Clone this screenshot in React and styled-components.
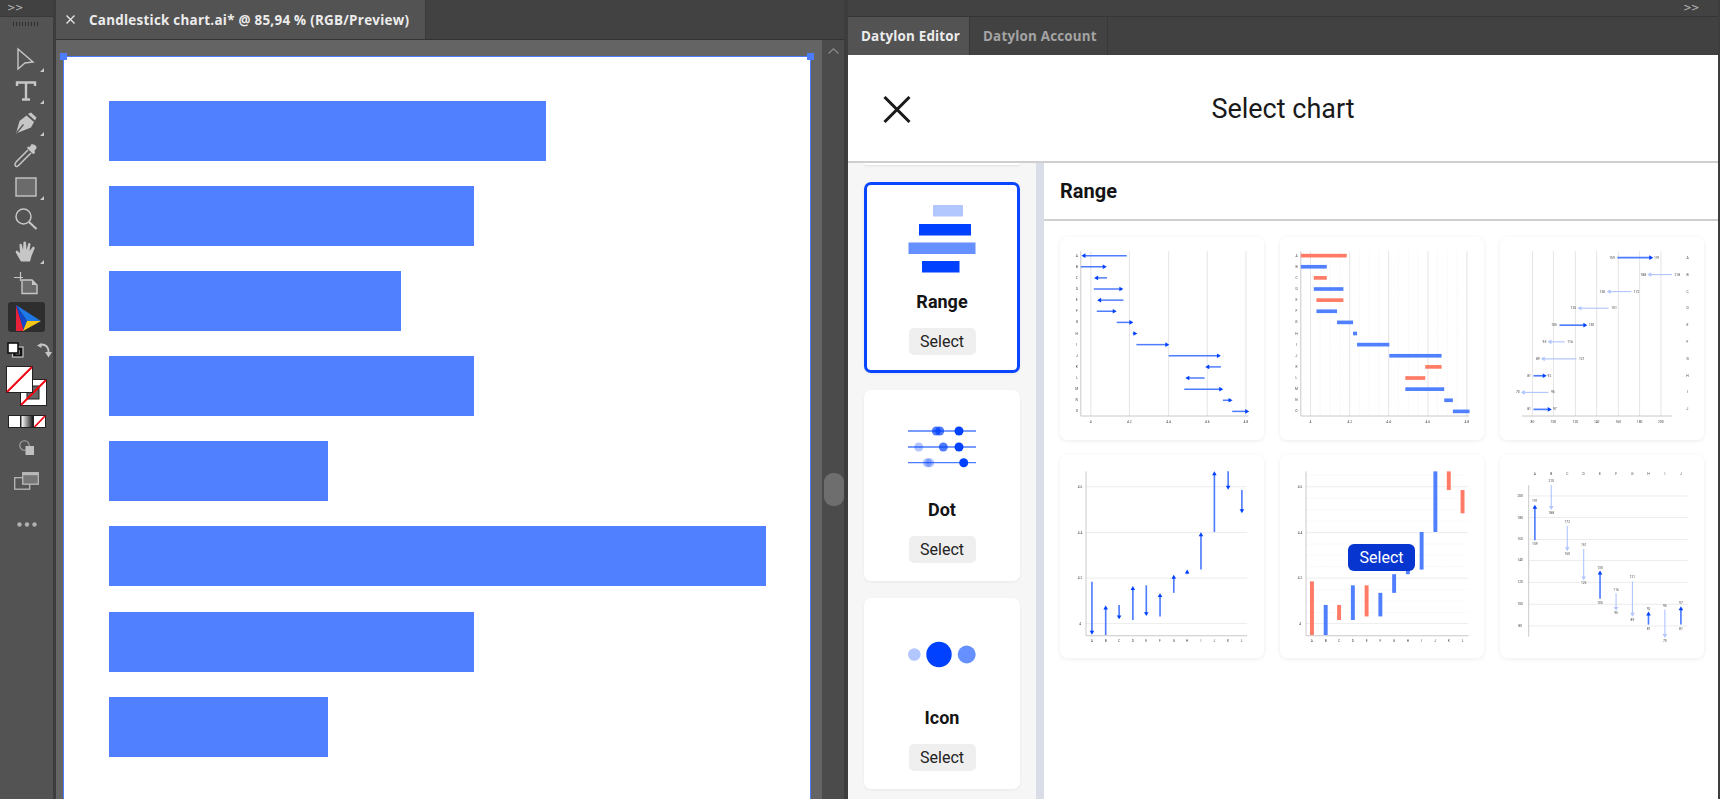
import React from 'react';
import styled, { createGlobalStyle } from 'styled-components';

const GlobalStyle = createGlobalStyle`
  html, body { margin: 0; padding: 0; height: 100%; background: #3d3d3d; overflow: hidden; }
  #root { height: 100%; }
  * { box-sizing: border-box; }
`;

const Page = styled.div`
  display: flex;
  width: 1720px;
  height: 799px;
  overflow: hidden;
  font-family: Roboto, "Liberation Sans", sans-serif;
  background: #3d3d3d;
`;

/* ---------- illustrator tool bar ---------- */

const Toolbar = styled.div`
  width: 53px;
  margin-right: 3px;
  flex-shrink: 0;
  display: flex;
  flex-direction: column;
  background: #535353;
`;

const ToolbarTop = styled.div`
  height: 17px;
  background: #414141;
  border-bottom: 1px solid #383838;
  color: #b8b8b8;
  font: 10px/16px "DejaVu Sans", sans-serif;
  padding-left: 7px;
  letter-spacing: -0.5px;
`;

const Grip = styled.div`
  height: 4px;
  margin: 5px 0 0 13px;
  width: 26px;
  background: repeating-linear-gradient(90deg, #2f2f2f 0 1px, transparent 1px 3px);
`;

const ToolSlot = styled.div`
  height: ${(p) => p.$h}px;
  flex-shrink: 0;
  display: flex;
  align-items: center;
  justify-content: center;
  position: relative;
  padding-right: ${(p) => p.$shift || 0}px;
`;

const ColorRow = styled.div`
  height: 18px;
  flex-shrink: 0;
  display: flex;
  align-items: center;
  gap: 12px;
  padding-left: 7px;
`;

const Flyout = styled.span`
  position: absolute;
  right: 9px;
  bottom: ${(p) => p.$b || 3}px;
  width: 0;
  height: 0;
  border-left: 4px solid transparent;
  border-bottom: 4px solid #c8c8c8;
`;

const LogoBox = styled.div`
  width: 37px;
  height: 30px;
  margin-left: 8px;
  border-radius: 3px;
  background: #2e2e2e;
  overflow: hidden;
`;

const ToolIcon = styled.svg`
  display: block;
  overflow: visible;
`;

const g = '#c6c6c6';

const SelectTool = () => (
  <ToolIcon width="18" height="22" viewBox="0 0 18 22">
    <path d="M1 1 L16 14 L8 15 L1 21 Z" fill="none" stroke={g} strokeWidth="1.4" />
  </ToolIcon>
);
const TypeTool = () => (
  <ToolIcon width="20" height="20" viewBox="0 0 20 20">
    <path d="M1 5 V1.5 H19 V5 M10 1.5 V18.5 M6 18.5 H14" fill="none" stroke={g} strokeWidth="2.4" />
  </ToolIcon>
);
const PenTool = () => (
  <ToolIcon width="22" height="22" viewBox="0 0 22 22">
    <path d="M13 2 L16 0.5 L21.5 5.5 L20 8.5 Z" fill={g} />
    <path d="M11.5 3.5 L19 10 L16 15.5 L1 21.5 L4.5 9 Z" fill={g} />
    <path d="M1.5 21 L8.5 12.5" stroke="#535353" strokeWidth="1.2" />
  </ToolIcon>
);
const DropperTool = () => (
  <ToolIcon width="23" height="23" viewBox="0 0 23 23">
    <path d="M17 0.5 Q20 -0.5 22.5 2.5 Q23 5 20.5 6.5 L21 9 L19 10 L13 4 L14 2.5 L16 3 Z" fill={g} />
    <path d="M14 6 L2.5 17.5 Q0 20.5 1.5 22 Q3 23.5 5.5 20.5 L17 9" fill="none" stroke={g} strokeWidth="1.5" />
  </ToolIcon>
);
const RectTool = () => (
  <ToolIcon width="22" height="20" viewBox="0 0 22 20">
    <rect x="1" y="1" width="20" height="18" fill="#6b6b6b" stroke={g} strokeWidth="1.4" />
  </ToolIcon>
);
const ZoomTool = () => (
  <ToolIcon width="22" height="22" viewBox="0 0 22 22">
    <circle cx="8.5" cy="8.5" r="7.5" fill="none" stroke={g} strokeWidth="1.5" />
    <path d="M14 14 L21.5 21" stroke={g} strokeWidth="2.2" />
  </ToolIcon>
);
const HandTool = () => (
  <ToolIcon width="21" height="21" viewBox="0 0 21 21">
    <path
      d="M6 20.5 L1 12 Q0 10 2 9.5 L5 12 L4.5 3.5 Q5.5 2 6.8 3.5 L8 9 L8.5 1 Q10 0 11 1 L11.5 9 L13.5 2 Q15 1.5 15.5 3 L14.5 10 L18 5.5 Q19.8 5.5 19.8 7 L16.5 15 L15 20.5 Z"
      fill={g}
    />
  </ToolIcon>
);
const ArtboardTool = () => (
  <ToolIcon width="24" height="22" viewBox="0 0 24 22">
    <path d="M0 5.5 H9 M6.5 0 V9" stroke={g} strokeWidth="1.2" fill="none" />
    <path d="M8 8 H18 L23 13 V21.5 H8 Z" fill="#6b6b6b" stroke={g} strokeWidth="1.4" />
    <path d="M18 8 V13 H23 Z" fill={g} />
  </ToolIcon>
);
const LogoMark = () => (
  <ToolIcon width="37" height="30" viewBox="0 0 37 30">
    <path d="M8 3 L33 19 L19 19 Z" fill="#1e78e6" />
    <path d="M8 3 L16 29 L8 29 Z" fill="#e8203a" />
    <path d="M8 3 L19 19 L16 29 Z" fill="#1448c8" />
    <path d="M15 29 L19 19 L33 19 Z" fill="#f5c518" />
  </ToolIcon>
);
const DefaultColors = () => (
  <ToolIcon width="17" height="16" viewBox="0 0 17 16">
    <rect x="5.5" y="5" width="10.5" height="10" fill="#111" stroke={g} strokeWidth="1.2" />
    <rect x="8.5" y="8" width="4.5" height="4.5" fill="#777" />
    <rect x="1" y="1" width="10" height="10" fill="#fff" stroke="#111" strokeWidth="1.6" />
  </ToolIcon>
);
const SwapColors = () => (
  <ToolIcon width="16" height="15" viewBox="0 0 16 15">
    <path d="M5 1.5 Q13 1.5 12.5 10" fill="none" stroke={g} strokeWidth="2" />
    <path d="M5.5 0 L1 2.5 L5.5 5 Z M9 9 H16 L12.5 14.5 Z" fill={g} />
  </ToolIcon>
);
const FillStroke = () => (
  <ToolIcon width="41" height="40" viewBox="0 0 41 40">
    <rect x="14.5" y="13.5" width="26" height="26" fill="#fff" stroke="#222" />
    <rect x="21" y="20" width="12" height="13" fill="#666" stroke="#222" />
    <path d="M15 39 L40 14" stroke="#f00010" strokeWidth="2" />
    <rect x="0.5" y="0.5" width="26" height="26" fill="#fff" stroke="#222" />
    <path d="M1 26 L26 1" stroke="#f00010" strokeWidth="2" />
  </ToolIcon>
);
const ColorModes = () => (
  <ToolIcon width="38" height="13" viewBox="0 0 38 13">
    <defs>
      <linearGradient id="modeGrad" x1="0" x2="1" y1="0" y2="0">
        <stop offset="0" stopColor="#fff" />
        <stop offset="1" stopColor="#222" />
      </linearGradient>
    </defs>
    <rect width="38" height="13" fill="#222" />
    <rect x="1" y="1" width="11" height="11" fill="#fff" />
    <rect x="13.5" y="1" width="11" height="11" fill="url(#modeGrad)" />
    <rect x="26" y="1" width="11" height="11" fill="#fff" />
    <path d="M26.5 12 L37 1" stroke="#f00010" strokeWidth="1.8" />
  </ToolIcon>
);
const DrawMode = () => (
  <ToolIcon width="15" height="15" viewBox="0 0 15 15">
    <circle cx="5.5" cy="5.5" r="4.7" fill="none" stroke="#a8a8a8" strokeWidth="1.1" />
    <rect x="6.5" y="6" width="8.5" height="9" fill="#c0c0c0" />
  </ToolIcon>
);
const ScreenMode = () => (
  <ToolIcon width="25" height="18" viewBox="0 0 25 18">
    <rect x="0.7" y="5.7" width="15" height="11.5" fill="#555" stroke="#b8b8b8" strokeWidth="1.3" />
    <rect x="8.7" y="0.7" width="15.6" height="11.5" fill="#777" stroke="#b8b8b8" strokeWidth="1.3" />
    <rect x="8.7" y="0.7" width="15.6" height="2.5" fill="#b8b8b8" />
  </ToolIcon>
);
const MoreDots = () => (
  <ToolIcon width="20" height="5" viewBox="0 0 20 5">
    <circle cx="2.5" cy="2.5" r="2.2" fill="#b0b0b0" />
    <circle cx="10" cy="2.5" r="2.2" fill="#b0b0b0" />
    <circle cx="17.5" cy="2.5" r="2.2" fill="#b0b0b0" />
  </ToolIcon>
);

const tools = [
  { h: 32, icon: SelectTool, fly: true },
  { h: 32, icon: TypeTool, fly: true },
  { h: 32, icon: PenTool, fly: true },
  { h: 32, icon: DropperTool },
  { h: 32, icon: RectTool, fly: true },
  { h: 32, icon: ZoomTool },
  { h: 32, icon: HandTool, fly: true },
  { h: 31, icon: ArtboardTool },
];

/* ---------- document area ---------- */

const DocArea = styled.div`
  width: 788px;
  flex-shrink: 0;
  display: flex;
  flex-direction: column;
  margin-right: 4px;
  min-height: 0;
`;

const DocTabBar = styled.div`
  height: 40px;
  flex-shrink: 0;
  display: flex;
  background: #424242;
  border-bottom: 1px solid #333;
`;

const DocTab = styled.div`
  width: 370px;
  display: flex;
  align-items: center;
  gap: 14px;
  padding-left: 10px;
  background: #535353;
  border-right: 1px solid #3a3a3a;
  color: #ececec;
  font: 700 13.4px "Open Sans", sans-serif;
  letter-spacing: 0.27px;
  white-space: nowrap;
`;

const DocBody = styled.div`
  flex: 1;
  display: flex;
  min-height: 0;
`;

const Canvas = styled.div`
  width: 766px;
  padding: 16px 0 0 7px;
  background: #646464;
  overflow: hidden;
`;

const Artboard = styled.div`
  position: relative;
  width: 748px;
  height: 800px;
  padding: 44px 0 0 45px;
  display: flex;
  flex-direction: column;
  gap: 25.1px;
  background: #fff;
  border: 1px solid #4d7cff;
`;

const Bar = styled.div`
  height: 60px;
  flex-shrink: 0;
  width: ${(p) => p.$w}px;
  background: #5080ff;
`;

const Handle = styled.span`
  position: absolute;
  top: -4px;
  ${(p) => (p.$right ? 'right: -4px;' : 'left: -4px;')}
  width: 7px;
  height: 7px;
  background: #4d7cff;
`;

const DocScroll = styled.div`
  width: 22px;
  display: flex;
  flex-direction: column;
  align-items: center;
  background: #4b4b4b;
`;

const Chevron = styled.svg`
  margin-top: 8px;
  display: block;
`;

const ScrollThumb = styled.div`
  width: 20px;
  height: 33px;
  margin: 419px 0 0 2px;
  border-radius: 9px;
  background: #6e6e6e;
`;

/* ---------- datylon panel ---------- */

const Panel = styled.div`
  width: 870px;
  flex-shrink: 0;
  display: flex;
  flex-direction: column;
  min-height: 0;
`;

const PanelTop = styled.div`
  height: 17px;
  flex-shrink: 0;
  background: #424242;
  border-bottom: 1px solid #363636;
  color: #b8b8b8;
  font: 10px/16px "DejaVu Sans", sans-serif;
  letter-spacing: -0.5px;
  text-align: right;
  padding-right: 19px;
`;

const TabBar = styled.div`
  height: 38px;
  flex-shrink: 0;
  display: flex;
  background: #414141;
`;

const Tab = styled.div`
  width: ${(p) => p.$w}px;
  display: flex;
  align-items: center;
  padding-left: 13px;
  background: ${(p) => (p.$active ? '#535353' : '#424242')};
  border-right: 1px solid #383838;
  color: ${(p) => (p.$active ? '#ececec' : '#a4a4a4')};
  font: 700 13.4px "Open Sans", sans-serif;
  letter-spacing: 0.2px;
`;

const ModalHead = styled.div`
  height: 108px;
  flex-shrink: 0;
  display: grid;
  grid-template-columns: 1fr auto 1fr;
  align-items: center;
  padding: 2px 0 0 35px;
  background: #fff;
  border-bottom: 2px solid #cfcfcf;
`;

const CloseIcon = styled.svg`
  display: block;
`;

const ModalTitle = styled.div`
  margin-left: -35px;
  font-size: 27px;
  color: #1a1a1a;
`;

const ModalBody = styled.div`
  flex: 1;
  display: flex;
  min-height: 0;
`;

const Sidebar = styled.div`
  width: 188px;
  flex-shrink: 0;
  padding: 0 16px;
  display: flex;
  flex-direction: column;
  gap: 17px;
  background: #f6f6f6;
  overflow: hidden;
`;

const CardStub = styled.div`
  height: 2px;
  flex-shrink: 0;
  background: #fff;
  border-radius: 0 0 6px 6px;
  box-shadow: 0 1px 2px rgba(0, 0, 0, 0.1);
`;

const TypeCard = styled.div`
  height: 191px;
  flex-shrink: 0;
  display: flex;
  flex-direction: column;
  align-items: center;
  border-radius: 7px;
  background: #fff;
  box-shadow: 0 1px 3px rgba(0, 0, 0, 0.06);
  border: ${(p) => (p.$selected ? '3px solid #0a46ff' : 'none')};
  padding-top: ${(p) => (p.$selected ? '20px' : '23px')};
`;

const TypeIcon = styled.svg`
  display: block;
  width: 68px;
  height: 68px;
`;

const TypeLabel = styled.div`
  margin-top: 17px;
  font-size: 18px;
  line-height: 24px;
  font-weight: 700;
  color: #141414;
`;

const SelectBtn = styled.div`
  width: 67px;
  height: 27px;
  margin-top: 14px;
  display: flex;
  align-items: center;
  justify-content: center;
  border-radius: 5px;
  background: #efefef;
  font-size: 16px;
  color: #222;
`;

const Divider = styled.div`
  width: 8px;
  flex-shrink: 0;
  background: #d9dde8;
`;

const Content = styled.div`
  flex: 1;
  min-width: 0;
  display: flex;
  flex-direction: column;
  background: #fff;
`;

const SectionHead = styled.div`
  height: 58px;
  flex-shrink: 0;
  display: flex;
  align-items: center;
  padding-left: 16px;
  font-size: 20px;
  font-weight: 700;
  color: #141414;
  border-bottom: 2px solid #cfcfcf;
`;

const ChartGrid = styled.div`
  display: grid;
  grid-template-columns: repeat(3, 204px);
  grid-auto-rows: 203px;
  column-gap: 16px;
  row-gap: 15px;
  padding: 16px 0 0 16px;
`;

const ChartCard = styled.div`
  position: relative;
  border-radius: 7px;
  background: #fff;
  box-shadow: 0 1px 4px rgba(0, 0, 0, 0.08);
`;

const ChartSvg = styled.svg`
  display: block;
  width: 100%;
  height: 100%;
  filter: blur(0.45px);
  font-family: Roboto, sans-serif;
  font-size: 10px;
  fill: #444;
`;

const HoverSelect = styled.div`
  position: absolute;
  left: 68px;
  top: 89px;
  width: 67px;
  height: 27px;
  display: flex;
  align-items: center;
  justify-content: center;
  border-radius: 6px;
  background: #0636cf;
  color: #fff;
  font-size: 16px;
`;

/* ---------- chart data, in a 612 x 610 box ---------- */

const DARK = '#0040ff';
const MID = '#4d7cff';
const LIGHT = '#b3c7ff';
const RED = '#ff7b66';
const BLUE = '#5080ff';
const letters = 'ABCDEFGHIJKLMNO'.split('');
const rowY = (i) => 61 + i * 33.43;

const hArrows = [
  [214, 84], [76, 148], [155, 122], [115, 198], [204, 131], [124, 178], [184, 228], [232, 240],
  [243, 336], [340, 491], [497, 456], [448, 396], [387, 498], [503, 526], [531, 576],
];

const hBars = [
  [74, 212, RED], [74, 152, BLUE], [113, 152, RED], [113, 202, BLUE], [121, 202, RED],
  [121, 183, BLUE], [183, 231, BLUE], [231, 243, BLUE], [243, 340, BLUE], [340, 497, BLUE],
  [448, 497, RED], [388, 448, RED], [388, 505, BLUE], [505, 531, BLUE], [531, 581, BLUE],
];

const sideRows = [
  [67, 'A', 364, 466, 1, '159', 348, '191', 483],
  [118, 'B', 528, 460, 0, '188', 442, '218', 544],
  [169, 'C', 406, 338, 0, '150', 319, '172', 422],
  [219, 'D', 338, 250, 0, '125', 232, '151', 354],
  [270, 'E', 190, 268, 1, '105', 174, '130', 286],
  [320, 'F', 206, 160, 0, '95', 145, '116', 222],
  [371, 'G', 241, 140, 0, '89', 125, '121', 257],
  [422, 'H', 112, 146, 1, '81', 99, '92', 160],
  [472, 'I', 157, 80, 0, '70', 65, '95', 170],
  [523, 'J', 112, 161, 1, '81', 99, '97', 176],
];

const vArrows = [
  [106, 397, 553], [148, 560, 476], [189, 468, 506], [231, 514, 416], [272, 408, 496], [314, 503, 438],
  [356, 431, 382], [397, 374, 366], [439, 360, 252], [480, 245, 66], [522, 60, 110], [564, 117, 182],
];

const vBars = [
  [104, 396, 560, RED], [146, 468, 560, BLUE], [187, 468, 514, RED], [229, 408, 514, BLUE],
  [271, 408, 503, RED], [313, 431, 503, BLUE], [355, 374, 431, BLUE], [397, 360, 374, BLUE],
  [439, 245, 360, BLUE], [481, 60, 245, BLUE], [522, 60, 117, RED], [564, 117, 188, RED],
];

const topRows = [
  [113, 'A', 270, 168, 1, '191', 152, '159', 282],
  [163, 'B', 102, 172, 0, '210', 90, '188', 186],
  [212, 'C', 227, 298, 0, '172', 215, '150', 312],
  [262, 'D', 297, 387, 0, '151', 285, '125', 401],
  [312, 'E', 449, 369, 1, '130', 354, '105', 461],
  [361, 'F', 432, 480, 0, '116', 421, '95', 494],
  [411, 'G', 396, 498, 0, '121', 384, '89', 513],
  [460, 'H', 528, 494, 1, '92', 480, '81', 540],
  [510, 'I', 482, 563, 0, '95', 470, '70', 577],
  [559, 'J', 528, 478, 1, '97', 463, '81', 540],
];

const HArrow = ({ y, from, to, line = MID, head = DARK, w = 4.5 }) => {
  const dir = to > from ? 1 : -1;
  return (
    <>
      <line x1={from} x2={to} y1={y} y2={y} stroke={line} strokeWidth={w} />
      <path d={`M${to + dir * 6} ${y} L${to - dir * 6} ${y - 7} V${y + 7} Z`} fill={head} />
    </>
  );
};

const VArrow = ({ x, from, to, line = MID, head = DARK, w = 4.5 }) => {
  const dir = to > from ? 1 : -1;
  return (
    <>
      <line x1={x} x2={x} y1={from} y2={to} stroke={line} strokeWidth={w} />
      <path d={`M${x} ${to + dir * 6} L${x - 7} ${to - dir * 6} H${x + 7} Z`} fill={head} />
    </>
  );
};

const Tx = ({ x, y, children, anchor = 'middle' }) => (
  <text x={x} y={y + 3} textAnchor={anchor}>
    {children}
  </text>
);

const RangeArrowChart = () => (
  <ChartSvg viewBox="14 5 612 610">
    {[106, 222, 340, 456, 572].map((x, i) => (
      <React.Fragment key={x}>
        <line x1={x} x2={x} y1="48" y2="543" stroke="#e4e4e4" strokeWidth="3" />
        <Tx x={x} y={562}>{['4', '4.2', '4.4', '4.6', '4.8'][i]}</Tx>
      </React.Fragment>
    ))}
    <path d="M76 48 V543 H580" fill="none" stroke="#c9c9c9" strokeWidth="3" />
    {hArrows.map(([a, b], i) => (
      <React.Fragment key={i}>
        <Tx x={64} y={rowY(i)}>{letters[i]}</Tx>
        <HArrow y={rowY(i)} from={a} to={b} />
      </React.Fragment>
    ))}
  </ChartSvg>
);

const RangeBarChart = () => (
  <ChartSvg viewBox="12 5 612 610">
    {[132, 162, 191, 250, 280, 309, 367, 397, 426, 485, 514, 544].map((x) => (
      <line key={x} x1={x} x2={x} y1="48" y2="543" stroke="#e8e8e8" strokeWidth="2" strokeDasharray="3 5" />
    ))}
    {[103, 221, 338, 456, 573].map((x, i) => (
      <React.Fragment key={x}>
        <line x1={x} x2={x} y1="48" y2="543" stroke="#e4e4e4" strokeWidth="3" />
        <Tx x={x} y={562}>{['4', '4.2', '4.4', '4.6', '4.8'][i]}</Tx>
      </React.Fragment>
    ))}
    <path d="M74 48 V543 H580" fill="none" stroke="#c9c9c9" strokeWidth="3" />
    {hBars.map(([a, b, c], i) => (
      <React.Fragment key={i}>
        <Tx x={61} y={rowY(i)}>{letters[i]}</Tx>
        <rect x={a} y={rowY(i) - 5.5} width={b - a} height="11" fill={c} />
      </React.Fragment>
    ))}
  </ChartSvg>
);

const LabelledRangeChart = () => (
  <ChartSvg viewBox="12 5 612 610">
    {[109, 172, 238, 302, 367, 431, 495].map((x, i) => (
      <React.Fragment key={x}>
        <line x1={x} x2={x} y1="48" y2="543" stroke="#e4e4e4" strokeWidth="3" />
        <Tx x={x} y={562}>{80 + i * 20}</Tx>
      </React.Fragment>
    ))}
    <line x1="78" x2="528" y1="543" y2="543" stroke="#c9c9c9" strokeWidth="3" />
    {sideRows.map(([y, l, a, b, up, lo, lx, hi, hx]) => (
      <React.Fragment key={l}>
        <Tx x={575} y={y}>{l}</Tx>
        <Tx x={lx} y={y}>{lo}</Tx>
        <Tx x={hx} y={y}>{hi}</Tx>
        <HArrow y={y} from={a} to={b} line={up ? MID : LIGHT} head={up ? DARK : LIGHT} w={up ? 5 : 3.5} />
      </React.Fragment>
    ))}
  </ChartSvg>
);

const ColumnArrowChart = () => (
  <ChartSvg viewBox="14 10 612 620">
    {[[107, '4.6'], [247, '4.4'], [386, '4.2'], [525, '4']].map(([y, t]) => (
      <React.Fragment key={y}>
        <line x1="88" x2="580" y1={y} y2={y} stroke="#ececec" strokeWidth="3" />
        <Tx x={70} y={y}>{t}</Tx>
      </React.Fragment>
    ))}
    <path d="M88 60 V562 H580" fill="none" stroke="#c9c9c9" strokeWidth="3" />
    {vArrows.map(([x, a, b], i) => (
      <React.Fragment key={x}>
        <VArrow x={x} from={a} to={b} w={5} />
        <Tx x={x} y={578}>{letters[i]}</Tx>
      </React.Fragment>
    ))}
  </ChartSvg>
);

const ColumnBarChart = () => (
  <ChartSvg viewBox="12 10 612 620">
    {[72, 142, 177, 212, 282, 316, 351, 421, 456, 491].map((y) => (
      <line key={y} x1="86" x2="582" y1={y} y2={y} stroke="#e8e8e8" strokeWidth="2" strokeDasharray="3 5" />
    ))}
    {[[107, '4.6'], [247, '4.4'], [386, '4.2'], [525, '4']].map(([y, t]) => (
      <React.Fragment key={y}>
        <line x1="86" x2="582" y1={y} y2={y} stroke="#ececec" strokeWidth="3" />
        <Tx x={68} y={y}>{t}</Tx>
      </React.Fragment>
    ))}
    <path d="M86 60 V562 H582" fill="none" stroke="#c9c9c9" strokeWidth="3" />
    {vBars.map(([x, a, b, c], i) => (
      <React.Fragment key={x}>
        <rect x={x - 6} y={a} width="12" height={b - a} fill={c} />
        <Tx x={x} y={578}>{letters[i]}</Tx>
      </React.Fragment>
    ))}
  </ChartSvg>
);

const LabelledColumnChart = () => (
  <ChartSvg viewBox="12 10 612 620">
    {[135, 201, 268, 332, 399, 466, 532].map((y, i) => (
      <React.Fragment key={y}>
        <line x1="94" x2="580" y1={y} y2={y} stroke="#ececec" strokeWidth="3" />
        <Tx x={68} y={y}>{200 - i * 20}</Tx>
      </React.Fragment>
    ))}
    <line x1="94" x2="94" y1="102" y2="565" stroke="#c9c9c9" strokeWidth="3" />
    {topRows.map(([x, l, a, b, up, hi, hy, lo, ly]) => (
      <React.Fragment key={l}>
        <Tx x={x} y={67}>{l}</Tx>
        <Tx x={x} y={hy}>{hi}</Tx>
        <Tx x={x} y={ly}>{lo}</Tx>
        <VArrow x={x} from={a} to={b} line={up ? MID : LIGHT} head={up ? DARK : LIGHT} w={up ? 5 : 3.5} />
      </React.Fragment>
    ))}
  </ChartSvg>
);

/* ---------- type card icons ---------- */

const RangeIcon = () => (
  <TypeIcon viewBox="0 0 68 68">
    <rect x="25" y="0" width="30" height="11.5" fill={LIGHT} />
    <rect x="11" y="19" width="52" height="11.5" fill={DARK} />
    <rect x="0.5" y="37.5" width="67" height="11.5" fill="#6690ff" />
    <rect x="14" y="56" width="37.5" height="11.5" fill={DARK} />
  </TypeIcon>
);

const dotRows = [
  [18, [[28.3, 0.7], [31.7, 0.7], [51, 1]]],
  [34, [[10.7, 0.3], [35.3, 0.7], [51, 1]]],
  [49.7, [[19.3, 0.3], [21.7, 0.3], [55.7, 1]]],
];

const DotIcon = () => (
  <TypeIcon viewBox="0 0 68 68">
    {dotRows.map(([y, dots]) => (
      <React.Fragment key={y}>
        <line x1="0" x2="68" y1={y} y2={y} stroke={MID} strokeWidth="1.3" />
        {dots.map(([x, o]) => (
          <circle key={x} cx={x} cy={y} r="4.5" fill={DARK} fillOpacity={o} />
        ))}
      </React.Fragment>
    ))}
  </TypeIcon>
);

const IconIcon = () => (
  <TypeIcon viewBox="0 0 68 68">
    <circle cx="6.3" cy="33.5" r="6.3" fill={LIGHT} />
    <circle cx="31" cy="33.5" r="12.7" fill={DARK} />
    <circle cx="58.7" cy="33.5" r="9" fill="#6690ff" />
  </TypeIcon>
);

const chartTypes = [
  { name: 'Range', icon: RangeIcon, selected: true },
  { name: 'Dot', icon: DotIcon },
  { name: 'Icon', icon: IconIcon },
];

const charts = [RangeArrowChart, RangeBarChart, LabelledRangeChart, ColumnArrowChart, ColumnBarChart, LabelledColumnChart];
const barWidths = [437, 365, 292, 365, 219, 657, 365, 219];

export default function App() {
  return (
    <Page>
      <GlobalStyle />
      <Toolbar>
        <ToolbarTop>&gt;&gt;</ToolbarTop>
        <Grip />
        <ToolSlot $h={17} />
        {tools.map(({ h, icon: Icon, fly }, i) => (
          <ToolSlot key={i} $h={h} $shift={2}>
            <Icon />
            {fly && <Flyout />}
          </ToolSlot>
        ))}
        <ToolSlot $h={4} />
        <LogoBox>
          <LogoMark />
        </LogoBox>
        <ToolSlot $h={9} />
        <ColorRow>
          <DefaultColors />
          <SwapColors />
        </ColorRow>
        <ToolSlot $h={7} />
        <ToolSlot $h={40} $shift={0}>
          <FillStroke />
        </ToolSlot>
        <ToolSlot $h={8} />
        <ToolSlot $h={14} $shift={0}>
          <ColorModes />
        </ToolSlot>
        <ToolSlot $h={11} />
        <ToolSlot $h={16}>
          <DrawMode />
        </ToolSlot>
        <ToolSlot $h={16} />
        <ToolSlot $h={19}>
          <ScreenMode />
        </ToolSlot>
        <ToolSlot $h={31} />
        <ToolSlot $h={6}>
          <MoreDots />
        </ToolSlot>
      </Toolbar>

      <DocArea>
        <DocTabBar>
          <DocTab>
            <CloseIcon width="9" height="9" viewBox="0 0 9 9">
              <path d="M0.5 0.5 L8.5 8.5 M8.5 0.5 L0.5 8.5" stroke="#e8e8e8" strokeWidth="1.3" />
            </CloseIcon>
            Candlestick chart.ai* @ 85,94 % (RGB/Preview)
          </DocTab>
        </DocTabBar>
        <DocBody>
          <Canvas>
            <Artboard>
              <Handle />
              <Handle $right />
              {barWidths.map((w, i) => (
                <Bar key={i} $w={w} />
              ))}
            </Artboard>
          </Canvas>
          <DocScroll>
            <Chevron width="11" height="6" viewBox="0 0 11 6">
              <path d="M0.5 5.5 L5.5 0.8 L10.5 5.5" fill="none" stroke="#8a8a8a" strokeWidth="1.2" />
            </Chevron>
            <ScrollThumb />
          </DocScroll>
        </DocBody>
      </DocArea>

      <Panel>
        <PanelTop>&gt;&gt;</PanelTop>
        <TabBar>
          <Tab $w={122} $active>Datylon Editor</Tab>
          <Tab $w={138}>Datylon Account</Tab>
        </TabBar>
        <ModalHead>
          <CloseIcon width="28" height="27" viewBox="0 0 28 27">
            <path d="M1.5 1 L26.5 26 M26.5 1 L1.5 26" stroke="#1a1a1a" strokeWidth="3" />
          </CloseIcon>
          <ModalTitle>Select chart</ModalTitle>
        </ModalHead>
        <ModalBody>
          <Sidebar>
            <CardStub />
            {chartTypes.map(({ name, icon: Icon, selected }) => (
              <TypeCard key={name} $selected={selected}>
                <Icon />
                <TypeLabel>{name}</TypeLabel>
                <SelectBtn>Select</SelectBtn>
              </TypeCard>
            ))}
          </Sidebar>
          <Divider />
          <Content>
            <SectionHead>Range</SectionHead>
            <ChartGrid>
              {charts.map((Chart, i) => (
                <ChartCard key={i}>
                  <Chart />
                  {i === 4 && <HoverSelect>Select</HoverSelect>}
                </ChartCard>
              ))}
            </ChartGrid>
          </Content>
        </ModalBody>
      </Panel>
    </Page>
  );
}
